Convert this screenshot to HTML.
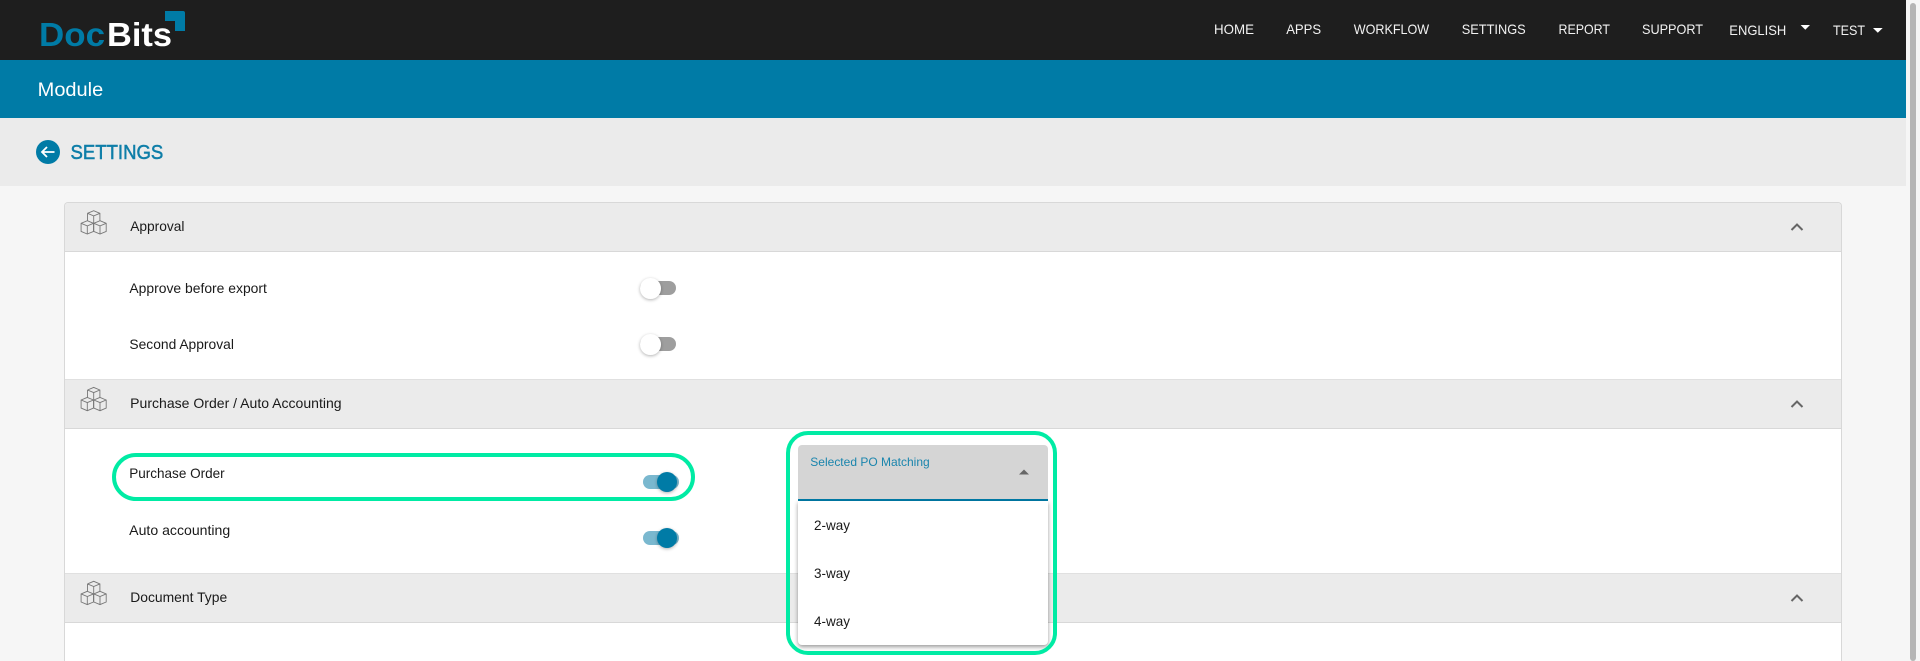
<!DOCTYPE html>
<html lang="en">
<head>
<meta charset="utf-8">
<title>DocBits Settings</title>
<style>
html,body{margin:0;padding:0;width:1920px;height:661px;overflow:hidden;background:#f6f6f6}
#root{position:relative;width:1920px;height:661px;overflow:hidden;background:#f6f6f6}
.a{position:absolute;box-sizing:border-box}
svg text{font-family:"Liberation Sans",sans-serif}
.trk-off{background:#9e9e9e;border-radius:7px;height:14px;width:36px}
.trk-on{background:#7ab8cf;border-radius:7px;height:14px;width:36px}
.knob{border-radius:50%;width:20.5px;height:20.5px;box-shadow:0 1px 3px rgba(0,0,0,.3)}
</style>
</head>
<body>
<div id="root">
<div class="a" style="left:0;top:0;width:1906px;height:60px;background:#1e1e1e"></div>
<div class="a" style="left:0;top:60px;width:1906px;height:58px;background:#007ba6"></div>
<div class="a" style="left:0;top:118px;width:1906px;height:68px;background:#ebebeb"></div>
<div class="a" style="left:1910px;top:3px;width:6px;height:658px;background:#b5b5b5;border-radius:3px"></div>

<div class="a" style="left:64px;top:202px;width:1777.5px;height:459px;background:#fff;border-left:1px solid #d8d8d8;border-right:1px solid #d8d8d8;border-top:1px solid #d8d8d8;border-radius:4px 4px 0 0"></div>
<div class="a" style="left:65px;top:203px;width:1775.5px;height:49px;background:#ebebeb;border-bottom:1px solid #d8d8d8;border-radius:3px 3px 0 0"></div>
<div class="a" style="left:65px;top:379px;width:1775.5px;height:49.5px;background:#ebebeb;border-top:1px solid #e0e0e0;border-bottom:1px solid #d8d8d8"></div>
<div class="a" style="left:65px;top:573px;width:1775.5px;height:49.5px;background:#ebebeb;border-top:1px solid #e0e0e0;border-bottom:1px solid #d8d8d8"></div>

<!-- toggles off -->
<div class="a trk-off" style="left:640px;top:281px"></div>
<div class="a knob" style="left:640.3px;top:278px;background:#fff"></div>
<div class="a trk-off" style="left:640px;top:337px"></div>
<div class="a knob" style="left:640.3px;top:334px;background:#fff"></div>
<!-- toggles on -->
<div class="a trk-on" style="left:643px;top:475px"></div>
<div class="a knob" style="left:656.5px;top:471.7px;background:#007ba6"></div>
<div class="a trk-on" style="left:643px;top:531px"></div>
<div class="a knob" style="left:656.5px;top:527.7px;background:#007ba6"></div>

<!-- select -->
<div class="a" style="left:798px;top:445px;width:250px;height:56px;background:#d5d5d5;border-bottom:2px solid #007ba6;border-radius:4px 4px 0 0"></div>
<div class="a" style="left:798px;top:501px;width:250px;height:144px;background:#fff;border-radius:0 0 4px 4px;box-shadow:0 2px 4px rgba(0,0,0,.4)"></div>

<!-- highlights -->
<div class="a" style="left:112px;top:452.7px;width:583px;height:48.5px;border:4.8px solid #00eba4;border-radius:24px"></div>
<div class="a" style="left:786px;top:431px;width:271px;height:224px;border:4.8px solid #00eba4;border-radius:22px"></div>

<svg class="a" style="left:0;top:0" width="1920" height="661" viewBox="0 0 1920 661" xmlns="http://www.w3.org/2000/svg">
  <defs>
    <g id="cube" fill="none" stroke="#777" stroke-width=".9">
      <path d="M0 0L6.2 2.6V10.7L0 13.3L-6.2 10.7V2.6Z"/>
      <path d="M-6.2 2.6L0 5.2L6.2 2.6M0 5.2V13.3"/>
    </g>
    <g id="cubes">
      <path d="M87.5 213.3L93.7 210.7L99.9 213.3V220.7M87.5 213.3V220.7M87.5 213.3L93.7 215.9L99.9 213.3M93.7 215.9V223.5" fill="none" stroke="#777" stroke-width=".9"/>
      <use href="#cube" x="87.3" y="220.7"/>
      <use href="#cube" x="100" y="220.7"/>
    </g>
    <path id="chev" d="M-5.5 3L0-2.5L5.5 3" fill="none" stroke="#666" stroke-width="2"/>
  </defs>

  <!-- logo -->
  <text x="39" y="46" font-size="33" font-weight="700" fill="#007ba6" textLength="66" lengthAdjust="spacingAndGlyphs">Doc</text>
  <text x="107" y="46" font-size="33" font-weight="700" fill="#fff" textLength="65" lengthAdjust="spacingAndGlyphs">Bits</text>
  <path d="M165 11H183Q185 11 185 13V31H175V21H165Z" fill="#007ba6"/>

  <!-- nav -->
  <g font-size="14" fill="#f2f2f2">
    <text x="1214" y="34" textLength="40" lengthAdjust="spacingAndGlyphs">HOME</text>
    <text x="1286.2" y="34" textLength="35" lengthAdjust="spacingAndGlyphs">APPS</text>
    <text x="1353.7" y="34" textLength="75.5" lengthAdjust="spacingAndGlyphs">WORKFLOW</text>
    <text x="1461.7" y="34" textLength="64" lengthAdjust="spacingAndGlyphs">SETTINGS</text>
    <text x="1558.5" y="34" textLength="51.5" lengthAdjust="spacingAndGlyphs">REPORT</text>
    <text x="1642" y="34" textLength="61" lengthAdjust="spacingAndGlyphs">SUPPORT</text>
    <text x="1729.3" y="35" textLength="57" lengthAdjust="spacingAndGlyphs">ENGLISH</text>
    <text x="1833" y="35" textLength="32" lengthAdjust="spacingAndGlyphs">TEST</text>
  </g>
  <path d="M1800.6 25H1810L1805.3 29.7Z" fill="#fff"/>
  <path d="M1873 28H1882.7L1877.8 32.8Z" fill="#fff"/>

  <!-- sub header -->
  <text x="37.7" y="96" font-size="19.5" fill="#fff" textLength="65.5" lengthAdjust="spacingAndGlyphs">Module</text>
  <circle cx="48" cy="152" r="12" fill="#007ba6"/>
  <path d="M54.5 152H42M47 147L42 152L47 157" fill="none" stroke="#fff" stroke-width="1.8"/>
  <text x="70.5" y="158.8" font-size="20" fill="#0e7ea8" stroke="#0e7ea8" stroke-width=".5" textLength="92.8" lengthAdjust="spacingAndGlyphs">SETTINGS</text>

  <!-- section icons -->
  <use href="#cubes"/>
  <use href="#cubes" y="176.7"/>
  <use href="#cubes" y="370.6"/>

  <!-- chevrons -->
  <use href="#chev" x="1797" y="227"/>
  <use href="#chev" x="1797" y="404"/>
  <use href="#chev" x="1797" y="598"/>

  <!-- labels -->
  <g font-size="14" fill="#1a1a1a">
    <text x="130.2" y="231" textLength="54.3" lengthAdjust="spacingAndGlyphs">Approval</text>
    <text x="130.2" y="408" textLength="211.4" lengthAdjust="spacingAndGlyphs">Purchase Order / Auto Accounting</text>
    <text x="130.2" y="602" textLength="97" lengthAdjust="spacingAndGlyphs">Document Type</text>
    <text x="129.4" y="293" textLength="137.5" lengthAdjust="spacingAndGlyphs">Approve before export</text>
    <text x="129.4" y="349" textLength="104.5" lengthAdjust="spacingAndGlyphs">Second Approval</text>
    <text x="129.2" y="478" textLength="95.5" lengthAdjust="spacingAndGlyphs">Purchase Order</text>
    <text x="129.2" y="535" textLength="101" lengthAdjust="spacingAndGlyphs">Auto accounting</text>
    <text x="814" y="530" textLength="36" lengthAdjust="spacingAndGlyphs">2-way</text>
    <text x="814" y="578" textLength="36" lengthAdjust="spacingAndGlyphs">3-way</text>
    <text x="814" y="626" textLength="36" lengthAdjust="spacingAndGlyphs">4-way</text>
  </g>
  <text x="810.3" y="466" font-size="12" fill="#1a85ad" textLength="119.4" lengthAdjust="spacing">Selected PO Matching</text>
  <path d="M1019 474.5H1029L1024 469.5Z" fill="#666"/>
</svg>
</div>
</body>
</html>
